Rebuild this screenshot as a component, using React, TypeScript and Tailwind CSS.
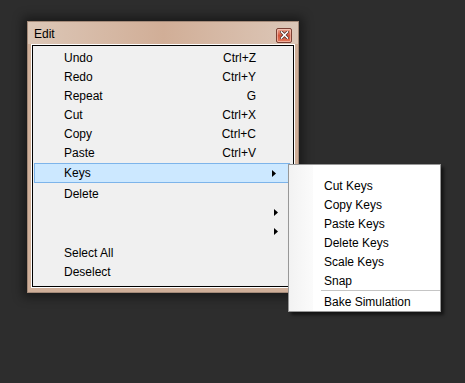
import React from 'react';

const Arrow = () => (
    <svg width="4" height="7" viewBox="0 0 4 7" className="block">
        <polygon points="0,0 4,3.5 0,7" fill="#000" />
    </svg>
);

const items: { label: string; key?: string }[] = [
    { label: 'Undo', key: 'Ctrl+Z' },
    { label: 'Redo', key: 'Ctrl+Y' },
    { label: 'Repeat', key: 'G' },
    { label: 'Cut', key: 'Ctrl+X' },
    { label: 'Copy', key: 'Ctrl+C' },
    { label: 'Paste', key: 'Ctrl+V' },
];

const subItems = ['Cut Keys', 'Copy Keys', 'Paste Keys', 'Delete Keys', 'Scale Keys', 'Snap'];

function Row({ label, keyText }: { label: string; keyText?: string }) {
    return (
        <div className="flex h-[19px] items-center pl-[31px] pr-[37px]">
            <span className="flex-1">{label}</span>
            {keyText && <span>{keyText}</span>}
        </div>
    );
}

function ArrowRow() {
    return (
        <div className="flex h-[19px] items-center justify-end pr-[15px]">
            <Arrow />
        </div>
    );
}

export default function App() {
    return (
        <div className="w-[465px] h-[383px] overflow-hidden bg-[#2d2d2d] pl-[27px] pt-[21px] font-['Liberation_Sans',Arial,sans-serif] text-[12px] text-black">
            <div className="relative w-[272px] border border-[#a48a79] bg-[#cfaf99] px-[3px] pb-[4px] shadow-[0_0_10px_4px_rgba(0,0,0,0.45)]">
                {/* title bar */}
                <div className="-mx-[3px] flex h-[22px] items-center justify-between bg-linear-to-r from-[#dcc7b7] via-[#d1ae97] to-[#dcc7b8] pl-[6px] pr-[6px]">
                    <span className="pt-[1px]">Edit</span>
                    <div className="mt-[4px] flex h-[15px] w-[16px] items-center justify-center rounded-[2px] border border-[#7a4034] bg-linear-to-b from-[#e9a591] via-[#d2533a] to-[#e27a5c] shadow-[inset_0_0_0_1px_rgba(255,220,210,0.55)]">
                        <svg width="9" height="8" viewBox="0 0 9 8">
                            <path d="M1.5 1 L7.5 7 M7.5 1 L1.5 7" stroke="#4a2a24" strokeWidth="3" strokeLinecap="square" />
                            <path d="M1.5 1 L7.5 7 M7.5 1 L1.5 7" stroke="#fff" strokeWidth="1.6" strokeLinecap="square" />
                        </svg>
                    </div>
                </div>
                {/* content */}
                <div className="border border-white">
                    <div className="border border-black bg-[#f0f0f0] pt-[2px] pb-[5px]">
                        {items.map((it) => (
                            <Row key={it.label} label={it.label} keyText={it.key} />
                        ))}
                        <div className="mt-[1px] ml-[1px] mr-[3px] flex h-[20px] items-center border border-[#7db4ea] bg-[#cce8ff] pl-[29px] pr-[13px]">
                            <span className="flex-1">Keys</span>
                            <Arrow />
                        </div>
                        <div className="mt-[1px]">
                            <Row label="Delete" />
                        </div>
                        <ArrowRow />
                        <ArrowRow />
                        <div className="mt-[2px]">
                            <Row label="Select All" />
                        </div>
                        <Row label="Deselect" />
                    </div>
                </div>

                {/* submenu */}
                <div className="absolute left-[260px] top-[142px] w-[153px] border border-[#979797] bg-white shadow-[3px_3px_3px_rgba(0,0,0,0.55)]">
                    <div className="flex">
                        <div className="w-[24px] shrink-0 bg-linear-to-r from-[#f2f2f2] to-[#fbfbfb]" />
                        <div className="flex-1 pt-[11px]">
                            {subItems.map((s) => (
                                <div key={s} className="flex h-[19px] items-center pl-[11px]">
                                    {s}
                                </div>
                            ))}
                            <div className="ml-[8px] mb-[2px] h-[1px] bg-[#c5c5c5]" />
                            <div className="flex h-[18px] items-center pl-[11px]">Bake Simulation</div>
                        </div>
                    </div>
                </div>
            </div>
        </div>
    );
}
